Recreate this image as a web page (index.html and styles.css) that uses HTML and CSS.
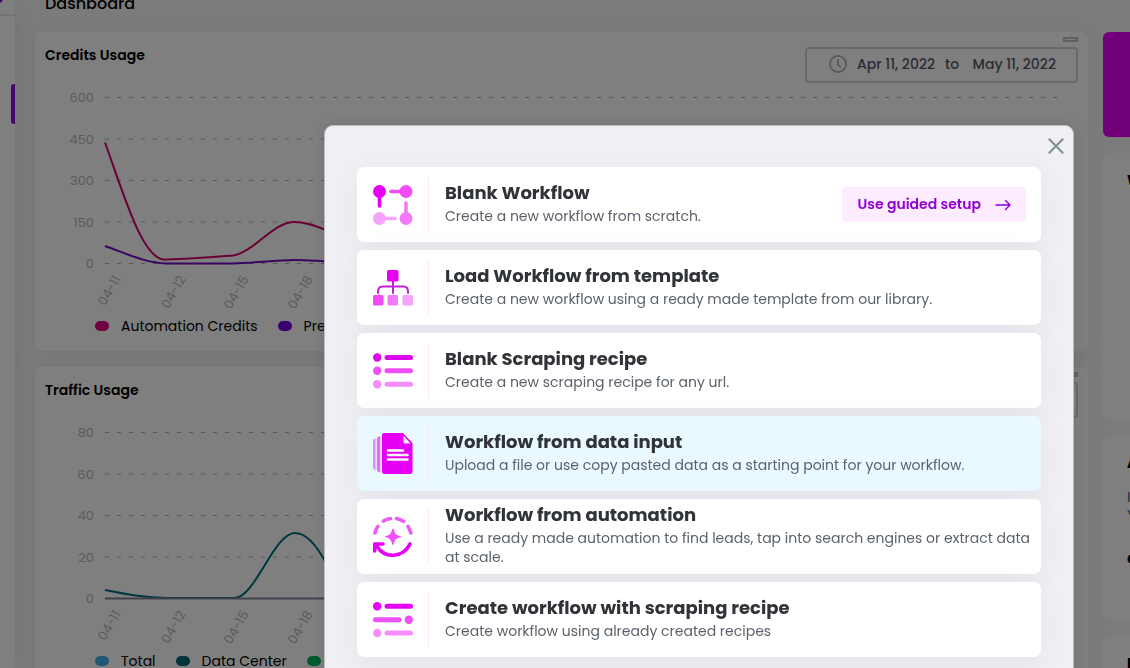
FILE: index.html
```
<!DOCTYPE html>
<html lang="en">
<head>
<meta charset="utf-8">
<title>Dashboard</title>
<link rel="stylesheet" href="styles.css">
</head>
<body>
<div class="app">
  <aside class="sidebar"><div class="sidebar-top"><svg viewBox="0 0 4 4"><path d="M0 0H2.500L1.500 2.500H0Z"/></svg></div><div class="sidebar-active"></div></aside>
  <main class="main">
    <h1 class="page-title">Dashboard</h1>
    <div class="columns">
      <div class="charts">
        <section class="panel">
          <header class="panel-head">
            <h2 class="panel-title">Credits Usage</h2>
            <div class="panel-tools">
              <button class="mini" aria-label="Options"></button>
              <button class="range">
                <svg class="clock" viewBox="0 0 16 16"><circle cx="8" cy="8" r="7.2"/><path d="M8 3.5V8.5L10.5 11"/></svg>
                <span>Apr 11, 2022</span><span>to</span><span class="range-end">May 11, 2022</span>
              </button>
            </div>
          </header>
          <svg class="chart">
            <g class="grid">
              <line x1="60" x2="100%" y1="14.5" y2="14.5"/><line x1="60" x2="100%" y1="56" y2="56"/><line x1="60" x2="100%" y1="97.5" y2="97.5"/><line x1="60" x2="100%" y1="139" y2="139"/><line x1="60" x2="100%" y1="180.5" y2="180.5"/>
            </g>
            <g class="ticks">
              <text x="49" y="19">600</text><text x="49" y="61">450</text><text x="49" y="102">300</text><text x="49" y="144">150</text><text x="49" y="185">0</text>
            </g>
            <g class="ticks">
              <text transform="translate(76 196) rotate(-60)">04-11</text><text transform="translate(141 196) rotate(-60)">04-12</text><text transform="translate(204 196) rotate(-60)">04-15</text><text transform="translate(268 196) rotate(-60)">04-18</text>
            </g>
            <path class="line indigo" d="M60 163C80 170 100 180 121 180.4H188C210 180 230 177 250 177C262 177 271 178 281 178.4C310 180 330 180 350 180"/>
            <path class="line pink" d="M60 59.500C79 112 98 179 121 176.6C145 176 169 174 188 172.5C210 169 227 139 250 139C261 139 271 143 281 147C300 155 320 165 350 170"/>
          </svg>
          <ul class="legend">
            <li><i class="dot dot-pink"></i><span>Automation Credits</span></li>
            <li><i class="dot dot-indigo"></i><span>Premium Credits</span></li>
          </ul>
        </section>
        <section class="panel">
          <header class="panel-head">
            <h2 class="panel-title">Traffic Usage</h2>
            <div class="panel-tools">
              <button class="mini" aria-label="Options"></button>
              <button class="range">
                <svg class="clock" viewBox="0 0 16 16"><circle cx="8" cy="8" r="7.2"/><path d="M8 3.5V8.5L10.5 11"/></svg>
                <span>Apr 11, 2022</span><span>to</span><span class="range-end">May 11, 2022</span>
              </button>
            </div>
          </header>
          <svg class="chart">
            <g class="grid">
              <line x1="60" x2="100%" y1="14.5" y2="14.5"/><line x1="60" x2="100%" y1="56" y2="56"/><line x1="60" x2="100%" y1="97.5" y2="97.5"/><line x1="60" x2="100%" y1="139" y2="139"/>
            </g>
            <g class="ticks">
              <text x="49" y="19">80</text><text x="49" y="61">60</text><text x="49" y="102">40</text><text x="49" y="144">20</text><text x="49" y="185">0</text>
            </g>
            <g class="ticks">
              <text transform="translate(76 196) rotate(-60)">04-11</text><text transform="translate(141 196) rotate(-60)">04-12</text><text transform="translate(204 196) rotate(-60)">04-15</text><text transform="translate(268 196) rotate(-60)">04-18</text>
            </g>
            <path class="line teal" d="M60 172C80 176 100 180 123 180H190C211 178 229 115 250 115C261 115 272 128 281 145C291 162 300 175 315 180"/>
            <path class="line base" d="M60 180.5H990"/>
          </svg>
          <ul class="legend">
            <li><i class="dot dot-sky"></i><span>Total</span></li>
            <li><i class="dot dot-teal"></i><span>Data Center</span></li>
            <li><i class="dot dot-green"></i><span>Residential</span></li>
          </ul>
        </section>
      </div>
      <div class="side">
        <div class="side-card promo"></div>
        <div class="side-card news"><b>W</b></div>
        <div class="side-card account"><b>A</b><p>I<br>Y</p><b>C</b></div>
        <div class="side-card docs"><b>D</b></div>
      </div>
    </div>
  </main>
</div>

<div class="overlay">
  <div class="modal" role="dialog" aria-modal="true" aria-label="Create">
    <div class="modal-bar">
      <button class="close" aria-label="Close"><svg viewBox="0 0 14 14"><path d="M.7 .7L13.3 13.3M13.3 .7L.7 13.3"/></svg></button>
    </div>
    <ul class="options">
      <li class="option">
        <svg class="icon" viewBox="0 0 40 42"><g fill="#e600f5" stroke="#e600f5"><circle cx="6.500" cy="7.500" r="6.500" /><path d="M6.500 8V22"/></g><g fill="#f04df8" stroke="#f04df8"><circle cx="33" cy="7.500" r="6.500"/><path d="M18 7.500H30"/></g><g fill="#f27afa" stroke="#f27afa"><circle cx="33" cy="34.500" r="6.500"/><path d="M33 19V32"/></g><g fill="#f5a3fc" stroke="#f5a3fc"><circle cx="6.500" cy="34.500" r="6.500"/><path d="M8 34.500H22"/></g></svg>
        <div class="option-text"><h3>Blank Workflow</h3><p>Create a new workflow from scratch.</p></div>
        <button class="guided">Use guided setup <svg viewBox="0 0 16 12"><path d="M1 6H15M10.500 1.500L15 6L10.500 10.500"/></svg></button>
      </li>
      <li class="option">
        <svg class="icon" viewBox="0 0 40 42"><path class="thin" d="M20 14V26M5 26V24.500Q5 19.500 10 19.500H30.500Q35 19.500 35 24.500V26" stroke="#c21fd6"/><g stroke="none"><rect x="14" y="3" width="11.500" height="11.500" rx="1.500" fill="#e600f5"/><rect x="0" y="28" width="10.500" height="10.500" rx="1.500" fill="#ee4cf6"/><rect x="14.500" y="28" width="10.500" height="10.500" rx="1.500" fill="#f27afa"/><rect x="29.500" y="28" width="10.500" height="10.500" rx="1.500" fill="#f5a3fc"/></g></svg>
        <div class="option-text"><h3>Load Workflow from template</h3><p>Create a new workflow using a ready made template from our library.</p></div>
      </li>
      <li class="option">
        <svg class="icon bars" viewBox="0 0 40 42"><g fill="#dd06ef" stroke="#dd06ef"><circle cx="4.200" cy="7.500" r="4.200"/><path d="M14 7.500H37.500"/></g><g fill="#ee4ff6" stroke="#ee4ff6"><circle cx="4.200" cy="20.800" r="4.200"/><path d="M14 20.800H37.500"/></g><g fill="#f58dfb" stroke="#f58dfb"><circle cx="4.200" cy="34.300" r="4.200"/><path d="M14 34.300H37.500"/></g></svg>
        <div class="option-text"><h3>Blank Scraping recipe</h3><p>Create a new scraping recipe for any url.</p></div>
      </li>
      <li class="option selected">
        <svg class="icon" viewBox="0 0 40 42"><g stroke="none"><path fill="#dc8deb" d="M2.500 5V37.500Q0 36.500 0 34V8.500Q0 6 2.500 5"/><path fill="#e66df2" d="M7.300 3V39.500Q3.800 39 3.800 36V6.500Q3.800 3.500 7.300 3"/><path fill="#e600f5" d="M11 0H30L39.500 10V38.500Q39.500 41 37 41H11.500Q9 41 9 38.500V2Q9 0 11 0"/><path fill="#f2ecff" d="M30.500 2.500V9Q30.500 10.500 32 10.500H37.500Z"/></g><path d="M15 17.500H30M15 22H34.500M15 26.500H34.500" stroke="#fff" stroke-width="2.500"/></svg>
        <div class="option-text"><h3>Workflow from data input</h3><p>Upload a file or use copy pasted data as a starting point for your workflow.</p></div>
      </li>
      <li class="option">
        <svg class="icon" viewBox="0 0 40 42"><g stroke="#ec5af5"><path d="M2 17Q2.800 13 4.800 10.500M10.500 5Q13.500 3 17.500 2.500M23.500 2.500Q27.500 3.300 30.500 5.300M35 10.500Q37 13.500 37.800 17"/></g><path fill="#ef50f7" stroke="none" d="M20 12Q20.500 12.500 21.800 16.500Q22.200 18.500 24 18.900L28.500 20.500Q28.500 20.800 24 22.500Q22.200 23 21.700 25L20 29.500Q19.500 29 18 25Q17.500 23.100 16 22.500L11.500 20.500Q12 20.300 16 18.900Q17.500 18.500 18 16.500Z"/><g stroke="#e600f5"><path d="M37 28C30 42 12 43 4 30.500"/><path d="M1.700 35V28H10"/></g></svg>
        <div class="option-text"><h3>Workflow from automation</h3><p>Use a ready made automation to find leads, tap into search engines or extract data at scale.</p></div>
      </li>
      <li class="option">
        <svg class="icon bars" viewBox="0 0 40 42"><g fill="#e600f5" stroke="#e600f5"><circle cx="4.200" cy="7.300" r="4.200"/><path d="M14 7.300H37.500"/></g><g fill="#ee4ff6" stroke="#ee4ff6"><circle cx="35.800" cy="20.700" r="4.200"/><path d="M2.500 20.700H26"/></g><g fill="#f58dfb" stroke="#f58dfb"><circle cx="4.200" cy="34" r="4.200"/><path d="M14 34H37.500"/></g></svg>
        <div class="option-text"><h3>Create workflow with scraping recipe</h3><p>Create workflow using already created recipes</p></div>
      </li>
    </ul>
  </div>
</div>
</body>
</html>
```
FILE: styles.css
```
* { box-sizing: border-box; }
body {
  margin: 0;
  height: 100vh;
  overflow: hidden;
  font-family: Poppins, Inter, sans-serif;
  font-size: 14px;
  color: #000;
  background: #f7f7f7;
}
h1, h2, h3, p, ul { margin: 0; padding: 0; }
ul { list-style: none; }
button { font: inherit; border: 0; background: none; padding: 0; cursor: pointer; }

.app { display: flex; height: 100vh; overflow: hidden; }
.sidebar { flex: 0 0 15px; background: #fff; box-shadow: 0 0 20px rgba(0, 0, 0, .08); }
.sidebar-top { height: 16px; border-bottom: 2px solid #e6e6e6; }
.sidebar-top svg { display: block; width: 4px; height: 4px; fill: #8a0bd8; }
.sidebar-active { width: 4px; height: 40px; margin: 68px 0 0 auto; border-radius: 3px 0 0 3px; background: #8a0bd8; }
.main { flex: 1; min-width: 0; padding-left: 20px; }
.page-title { height: 32px; margin-left: 10px; font-size: 16px; font-weight: 500; line-height: 8px; }
.columns { display: flex; align-items: flex-start; gap: 15px; }
.charts { flex: 1; min-width: 0; display: grid; gap: 16px; }
.panel { padding: 5px 10px 13px; border-radius: 6px; background: #fff; box-shadow: 0 0 24px rgba(0, 0, 0, .06); }
.panel-head { display: flex; justify-content: space-between; }
.panel-title { padding-top: 8px; font-size: 14px; font-weight: 600; line-height: 20px; }
.panel-tools { display: flex; flex-direction: column; align-items: flex-end; gap: 5px; }
.mini { width: 15px; height: 5px; border: 2px solid #c0c0c0; background: #fff; }
.range {
  display: flex; align-items: center; gap: 10px;
  width: 273px; height: 36px; padding: 0 20px 2px 22px;
  border: 2px solid #cdd4da; border-radius: 4px;
  color: #555b66; font-weight: 500; white-space: nowrap;
}
.range-end { margin-left: auto; }
.clock { width: 18px; height: 18px; fill: none; stroke: #adb2b6; stroke-width: 1.6; }
.chart { display: block; width: calc(100% - 21px); height: 231px; overflow: visible; }
.grid line { stroke: #b0b0b0; stroke-dasharray: 4 8; }
.ticks text { fill: #b8b8b8; font-size: 13px; text-anchor: end; }
.line { fill: none; stroke-width: 2; }
.pink { stroke: #d6006c; }
.indigo { stroke: #7209c7; }
.teal { stroke: #006d7d; }
.base { stroke: #83839b; }
.legend { display: flex; gap: 20px; padding-left: 50px; line-height: 24px; white-space: nowrap; }
.legend li { display: flex; align-items: center; gap: 12px; }
.dot { width: 14px; height: 10px; border-radius: 5px; }
.dot-pink { background: #e00080; }
.dot-indigo { background: #7600dc; }
.dot-sky { background: #42aee6; }
.dot-teal { background: #006b7a; }
.dot-green { background: #00b85c; }

.side { flex: 0 0 27px; display: grid; gap: 16px; align-content: start; overflow: hidden; }
.side-card { border-radius: 6px 0 0 6px; padding: 16px 0 0 24px; background: #fff; font-size: 14px; line-height: 22px; overflow: hidden; }
.side-card p { margin: 14px 0 24px; line-height: 18px; color: #555b66; }
.promo { height: 105px; background: #e600f5; }
.news { height: 267px; }
.account { height: 184px; }
.docs { height: 120px; }

.overlay { position: fixed; inset: 0; padding: 125px 56px 0 324px; background: rgba(0, 0, 0, .5); overflow: hidden; }
.modal { min-height: 600px; padding: 0 32px 32px; border: 1px solid #bdbdc0; border-radius: 9px; background: #f0eff4; box-shadow: 0 0 16px rgba(0, 0, 0, .1); }
.modal-bar { display: flex; justify-content: flex-end; align-items: center; height: 41px; margin-right: -23px; padding-bottom: 1px; }
.close { display: flex; }
.close svg { width: 16px; height: 16px; fill: none; stroke: #85929a; stroke-width: 2; }
.options { display: grid; gap: 8px; }
.option { display: flex; align-items: center; height: 75px; padding: 0 10px 0 16px; border-radius: 7px; background: #fff; box-shadow: 0 8px 32px rgba(40, 60, 80, .06); }
.selected { background: #e9f9ff; }
.icon { flex: none; width: 40px; height: 42px; fill: none; stroke-width: 3.600; stroke-linecap: round; stroke-linejoin: round; }
.icon .thin { stroke-width: 2; }
.bars { stroke-width: 5; }
.icon circle { stroke: none; }
.option-text { flex: 1; align-self: stretch; display: flex; flex-direction: column; justify-content: center; gap: 1px; margin: 10px 0 10px 15px; padding: 0 0 5px 16px; border-left: 1px solid #fbe6fa; }
.option-text h3 { font-size: 18px; font-weight: 700; line-height: 27px; color: #303338; }
.option-text p { line-height: 19px; color: #5b626b; }
.guided { display: flex; align-items: center; gap: 14px; height: 35px; margin-right: 5px; padding: 0 15px 0 16px; border-radius: 4px; background: #fdebff; color: #8f00d6; font-weight: 600; }
.guided svg { width: 16px; height: 12px; fill: none; stroke: #8f00d6; stroke-width: 1.4; stroke-linecap: round; stroke-linejoin: round; }
```
